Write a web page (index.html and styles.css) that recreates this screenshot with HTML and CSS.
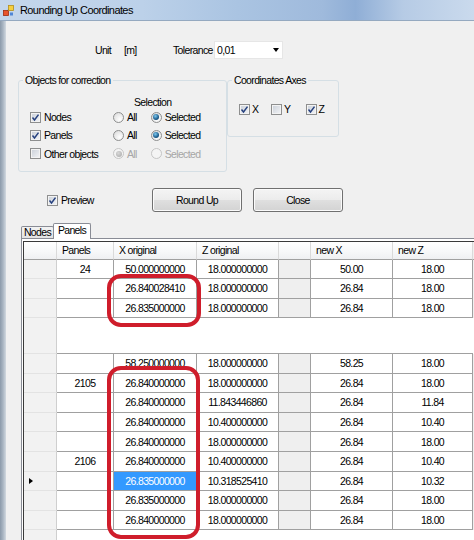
FILE: index.html
```html
<!DOCTYPE html>
<html>
<head>
<meta charset="utf-8">
<title>Rounding Up Coordinates</title>
<link rel="stylesheet" href="styles.css">
</head>
<body>
<div class="window">
  <div class="titlebar">
    <svg class="app-icon" width="11" height="11" viewBox="0 0 11 11">
      <path d="M3 7 L8 3" stroke="#3d6fb8" stroke-width="1.2"/>
      <rect x="0.5" y="5.5" width="5" height="5" fill="#e8542c" stroke="#a02c12" stroke-width="0.8"/>
      <rect x="5.5" y="0.5" width="5" height="5" fill="#f6cf3e" stroke="#b38e1c" stroke-width="0.8"/>
      <rect x="7" y="7.5" width="3" height="3" fill="#4f86d6"/>
    </svg>
    <span class="title">Rounding Up Coordinates</span>
  </div>
  <div class="body">
    <div class="frame-left"></div>
    <div class="client">
      <div class="unit-row">
        <span class="u-unit">Unit</span>
        <span class="u-m">[m]</span>
        <span class="u-tol">Tolerance</span>
        <div class="combo"><span>0,01</span><span class="combo-arrow"></span></div>
      </div>

      <div class="groups">
        <fieldset class="group grp-objects">
          <legend>Objects for correction</legend>
          <div class="sel-head">Selection</div>
          <div class="obj-grid">
            <span class="opt"><span class="cb"><svg width="9" height="9" viewBox="0 0 9 9"><path d="M1.5 4.6 L3.5 7 L7.5 1.6" fill="none" stroke="#26407e" stroke-width="1.5"/></svg></span>Nodes</span>
            <span class="opt"><span class="rb"></span>All</span>
            <span class="opt"><span class="rb on"></span>Selected</span>

            <span class="opt"><span class="cb"><svg width="9" height="9" viewBox="0 0 9 9"><path d="M1.5 4.6 L3.5 7 L7.5 1.6" fill="none" stroke="#26407e" stroke-width="1.5"/></svg></span>Panels</span>
            <span class="opt"><span class="rb"></span>All</span>
            <span class="opt"><span class="rb on"></span>Selected</span>

            <span class="opt"><span class="cb"></span>Other objects</span>
            <span class="opt dis"><span class="rb dis on"></span>All</span>
            <span class="opt dis"><span class="rb dis"></span>Selected</span>
          </div>
        </fieldset>

        <fieldset class="group grp-axes">
          <legend>Coordinates Axes</legend>
          <div class="axes-row">
            <span class="opt ax-x"><span class="cb"><svg width="9" height="9" viewBox="0 0 9 9"><path d="M1.5 4.6 L3.5 7 L7.5 1.6" fill="none" stroke="#26407e" stroke-width="1.5"/></svg></span>X</span>
            <span class="opt ax-y"><span class="cb"></span>Y</span>
            <span class="opt"><span class="cb"><svg width="9" height="9" viewBox="0 0 9 9"><path d="M1.5 4.6 L3.5 7 L7.5 1.6" fill="none" stroke="#26407e" stroke-width="1.5"/></svg></span>Z</span>
          </div>
        </fieldset>
      </div>

      <div class="actions">
        <span class="opt preview"><span class="cb"><svg width="9" height="9" viewBox="0 0 9 9"><path d="M1.5 4.6 L3.5 7 L7.5 1.6" fill="none" stroke="#26407e" stroke-width="1.5"/></svg></span>Preview</span>
        <button class="btn">Round Up</button>
        <button class="btn btn-close">Close</button>
      </div>

      <div class="tabs">
        <div class="tab tab-nodes">Nodes</div>
        <div class="tab tab-panels active">Panels</div>
      </div>
      <div class="tabpage">
        <div class="dgv">
          <div class="r hd">
            <div class="h"></div><div class="h">Panels</div><div class="h">X original</div><div class="h">Z original</div><div class="h"></div><div class="h">new X</div><div class="h">new Z</div><div class="h fl"></div>
          </div>

          <div class="r"><div class="rh"></div><div class="c">24</div><div class="c">50.000000000</div><div class="c">18.000000000</div><div class="c bl"></div><div class="c">50.00</div><div class="c">18.00</div><div class="fill"></div></div>
          <div class="r"><div class="rh"></div><div class="c"></div><div class="c">26.840028410</div><div class="c">18.000000000</div><div class="c bl"></div><div class="c">26.84</div><div class="c">18.00</div><div class="fill"></div></div>
          <div class="r"><div class="rh"></div><div class="c"></div><div class="c">26.835000000</div><div class="c">18.000000000</div><div class="c bl"></div><div class="c">26.84</div><div class="c">18.00</div><div class="fill"></div></div>

          <div class="r gap"><div class="rh"></div><div class="gap-span"></div><div class="gap-fill"></div></div>

          <div class="r"><div class="rh"></div><div class="c"></div><div class="c">58.250000000</div><div class="c">18.000000000</div><div class="c bl"></div><div class="c">58.25</div><div class="c">18.00</div><div class="fill"></div></div>
          <div class="r"><div class="rh"></div><div class="c">2105</div><div class="c">26.840000000</div><div class="c">18.000000000</div><div class="c bl"></div><div class="c">26.84</div><div class="c">18.00</div><div class="fill"></div></div>
          <div class="r"><div class="rh"></div><div class="c"></div><div class="c">26.840000000</div><div class="c">11.843446860</div><div class="c bl"></div><div class="c">26.84</div><div class="c">11.84</div><div class="fill"></div></div>
          <div class="r"><div class="rh"></div><div class="c"></div><div class="c">26.840000000</div><div class="c">10.400000000</div><div class="c bl"></div><div class="c">26.84</div><div class="c">10.40</div><div class="fill"></div></div>
          <div class="r"><div class="rh"></div><div class="c"></div><div class="c">26.840000000</div><div class="c">18.000000000</div><div class="c bl"></div><div class="c">26.84</div><div class="c">18.00</div><div class="fill"></div></div>
          <div class="r"><div class="rh"></div><div class="c">2106</div><div class="c">26.840000000</div><div class="c">10.400000000</div><div class="c bl"></div><div class="c">26.84</div><div class="c">10.40</div><div class="fill"></div></div>
          <div class="r"><div class="rh cur"><span class="tri"></span></div><div class="c"></div><div class="c sel">26.835000000</div><div class="c">10.318525410</div><div class="c bl"></div><div class="c">26.84</div><div class="c">10.32</div><div class="fill"></div></div>
          <div class="r"><div class="rh"></div><div class="c"></div><div class="c">26.835000000</div><div class="c">18.000000000</div><div class="c bl"></div><div class="c">26.84</div><div class="c">18.00</div><div class="fill"></div></div>
          <div class="r"><div class="rh"></div><div class="c"></div><div class="c">26.840000000</div><div class="c">18.000000000</div><div class="c bl"></div><div class="c">26.84</div><div class="c">18.00</div><div class="fill"></div></div>

          <div class="r tail"><div class="rh"></div><div class="tail-rest"></div></div>
        </div>
      </div>
    </div>
  </div>
  <div class="mark mark-a"></div>
  <div class="mark mark-b"></div>
</div>
</body>
</html>
```

FILE: styles.css
```css
* { box-sizing: border-box; }
html, body { margin: 0; padding: 0; }
body {
  width: 474px;
  height: 540px;
  overflow: hidden;
  background: #f0f0f0;
  font-family: "Liberation Sans", Arial, sans-serif;
  font-size: 10.5px;
  letter-spacing: -0.65px;
  color: #000;
}
.window {
  position: relative;
  width: 474px;
  height: 540px;
  overflow: hidden;
  background: #f0f0f0;
}

/* title bar */
.titlebar {
  height: 21px;
  display: flex;
  align-items: center;
  gap: 6px;
  padding-left: 3px;
  background: linear-gradient(to right, #c4d6eb 0%, #bcd1e9 30%, #aac4e2 50%, #9fbadc 68%, #8faed6 75%, #b6cbe5 85%, #cadaed 100%);
  border-bottom: 1px solid #95a9c0;
}
.app-icon { flex: none; }
.title { font-size: 11px; letter-spacing: -0.6px; color: #000; }

.body { display: flex; height: 519px; }
.frame-left {
  width: 6px;
  flex: none;
  background: linear-gradient(to right, #8c9aaa, #a9b5c2 50%, #d2d9e0);
}
.client { flex: 1; min-width: 0; }

/* unit row */
.unit-row {
  display: flex;
  align-items: center;
  height: 18px;
  margin-top: 20px;
  padding-left: 89px;
  white-space: nowrap;
}
.u-unit { width: 29px; }
.u-m { width: 49px; }
.u-tol { width: 41px; }
.combo {
  width: 69px;
  height: 18px;
  background: #fff;
  border: 1px solid #e6e6e6;
  display: flex;
  align-items: center;
  justify-content: space-between;
  padding: 0 3px 0 2px;
}
.combo-arrow {
  width: 0;
  height: 0;
  border-left: 3.5px solid transparent;
  border-right: 3.5px solid transparent;
  border-top: 4px solid #000;
}

/* group boxes */
.groups {
  display: flex;
  align-items: flex-start;
  margin-top: 14px;
  padding-left: 12px;
}
fieldset.group {
  margin: 0;
  padding: 0;
  border: 1px solid #d5dfe5;
  border-radius: 3px;
  min-width: 0;
}
fieldset.group legend {
  padding: 0 2px;
  margin-left: 4px;
  line-height: 14px;
}
.grp-objects { width: 209px; height: 99px; }
.grp-axes { width: 112px; height: 64px; margin-left: 15px; margin-top: 20px; }

.sel-head { margin: 9px 0 0 115px; line-height: 12px; }
.obj-grid {
  display: grid;
  grid-template-columns: 83px 37.7px auto;
  grid-auto-rows: 18.3px;
  align-items: center;
  padding-left: 11px;
  white-space: nowrap;
}
.opt { display: flex; align-items: center; gap: 3px; white-space: nowrap; }
.opt.dis { color: #a6a6a6; }

.cb {
  width: 11px;
  height: 11px;
  flex: none;
  border: 1px solid #8e8f8f;
  background: linear-gradient(135deg, #c9cfd8, #f4f5f7);
  box-shadow: inset 0 0 0 1px #f3f3f3;
  display: inline-flex;
  align-items: center;
  justify-content: center;
}
.cb svg { display: block; }
.rb {
  width: 11px;
  height: 11px;
  flex: none;
  border-radius: 50%;
  border: 1px solid #8e8f8f;
  background: radial-gradient(circle at 65% 70%, #ffffff, #d8d8d8);
  display: inline-flex;
  align-items: center;
  justify-content: center;
}
.rb.on::after {
  content: "";
  width: 6px;
  height: 6px;
  border-radius: 50%;
  background: radial-gradient(circle at 40% 35%, #7fcaf0, #1b5c8c 60%, #0e3a5f);
}
.rb.dis { border-color: #c5c5c5; background: #f4f4f4; }
.rb.dis.on::after { background: radial-gradient(circle at 40% 35%, #d8d8d8, #a8a8a8); }

.axes-row {
  display: flex;
  align-items: center;
  height: 14px;
  margin-top: 15px;
  padding-left: 11px;
}
.axes-row .opt { gap: 2px; }
.ax-x { width: 32px; }
.ax-y { width: 34.5px; }

/* actions */
.actions {
  display: flex;
  align-items: center;
  height: 24px;
  margin-top: 16px;
  padding-left: 41px;
}
.preview { width: 105px; }
.btn {
  font: inherit;
  letter-spacing: inherit;
  color: #000;
  width: 90px;
  height: 24px;
  padding: 0;
  border: 1px solid #707070;
  border-radius: 3px;
  background: linear-gradient(#f4f4f4 0%, #ececec 48%, #dfdfdf 52%, #d3d3d3 100%);
  box-shadow: inset 0 0 0 1px #fbfbfb;
}
.btn-close { margin-left: 11px; }

/* tabs */
.tabs {
  display: flex;
  align-items: flex-end;
  height: 15px;
  margin-top: 11px;
  margin-left: 15px;
}
.tab {
  height: 12px;
  border: 1px solid #898c95;
  border-bottom: none;
  border-radius: 2px 2px 0 0;
  background: linear-gradient(#f3f3f3, #e2e2e2);
  line-height: 11px;
  text-align: center;
}
.tab-nodes { width: 33px; }
.tab-panels { width: 38px; margin-left: -1px; }
.tab.active {
  position: relative;
  z-index: 1;
  height: 16px;
  margin-bottom: -1px;
  background: #fff;
  line-height: 13px;
}

.tabpage {
  width: 470px;
  height: 320px;
  margin-left: 15px;
  border-top: 1px solid #898c95;
  border-left: 1px solid #898c95;
  background: #fff;
  padding: 2px 0 0 1px;
}

/* data grid */
.dgv {
  border-top: 1px solid #3a3a3a;
  border-left: 1px solid #3a3a3a;
  background: #fff;
  height: 100%;
}
.r {
  display: grid;
  grid-template-columns: 33px 57px 83px 82px 32px 82px 80px 40px;
  height: 19.6px;
}
.r.hd { height: 17.5px; }
.h {
  background: linear-gradient(#ffffff, #f7f8f9 55%, #eff0f2);
  border-right: 1px solid #dadada;
  border-bottom: 1px solid #a0a0a0;
  padding-left: 5px;
  display: flex;
  align-items: center;
  white-space: nowrap;
}
.h.fl { border-right: none; background: #f0f0f0; }
.rh {
  background: #f2f2f2;
  border-right: 1px solid #cfcfcf;
  border-bottom: 1px solid #e3e3e3;
  display: flex;
  align-items: center;
  padding-left: 5px;
}
.c {
  border-right: 1px solid #a0a0a0;
  border-bottom: 1px solid #a0a0a0;
  display: flex;
  align-items: center;
  justify-content: center;
  white-space: nowrap;
}
.c.bl { background: #efefef; }
.c.sel { background: #3399ff; color: #fff; }
.fill { background: #f0f0f0; }
.tri {
  width: 0;
  height: 0;
  border-left: 4px solid #000;
  border-top: 3.5px solid transparent;
  border-bottom: 3.5px solid transparent;
}
.r.gap { height: 35.7px; }
.gap-span { grid-column: 2 / 8; border-bottom: 1px solid #a0a0a0; }
.gap-fill { background: #fff; }
.r.tail { height: 20px; }
.tail-rest { grid-column: 2 / 9; background: #fff; }

/* annotation marks drawn over the grid */
.mark {
  position: absolute;
  border: 4px solid #cf1d2b;
  border-radius: 14px;
}
.mark-a { left: 107px; top: 274px; width: 94px; height: 53px; }
.mark-b { left: 107px; top: 366px; width: 93px; height: 173px; }
```
